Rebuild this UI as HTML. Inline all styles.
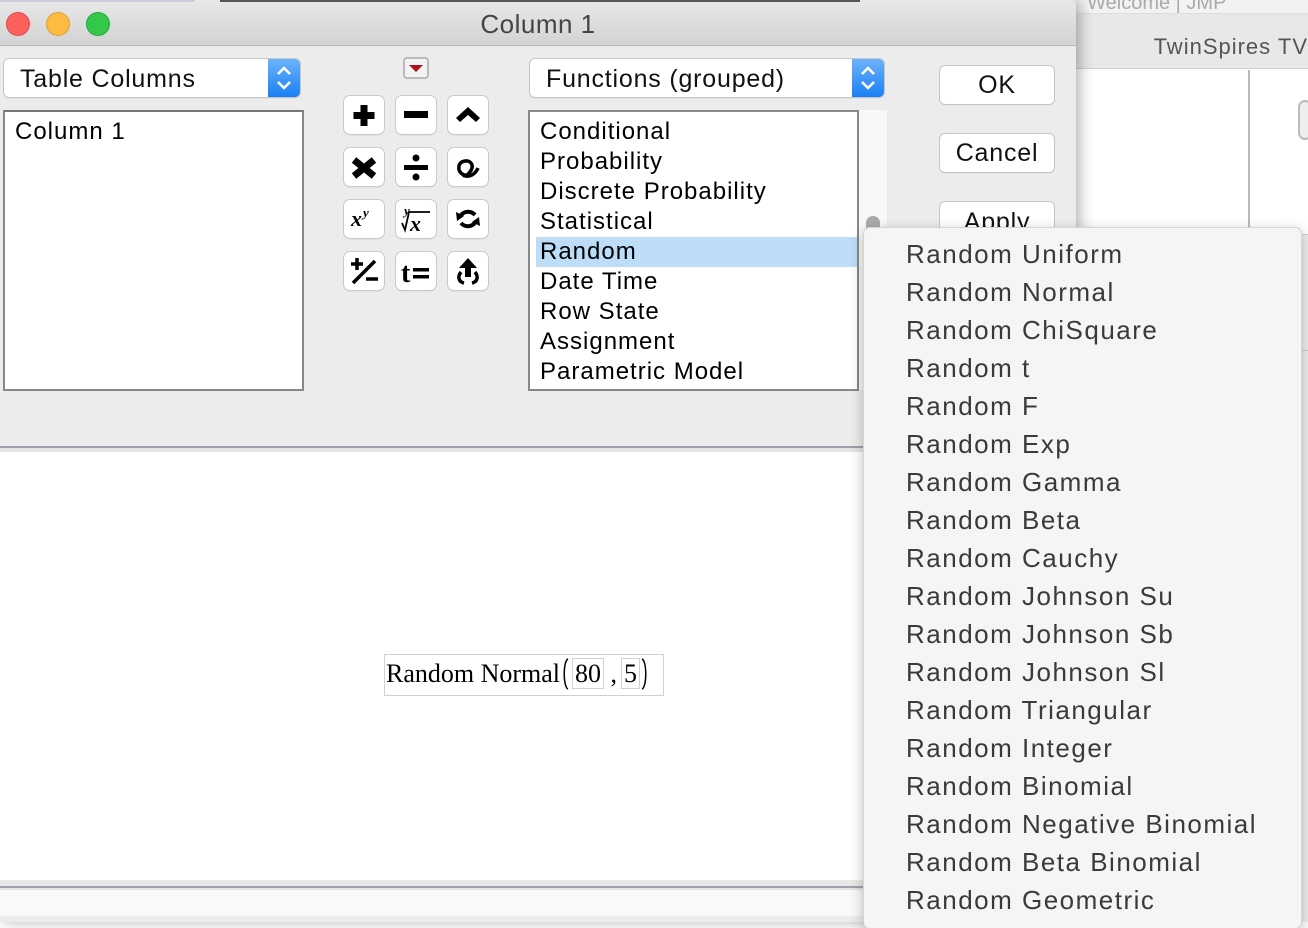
<!DOCTYPE html>
<html><head><meta charset="utf-8"><style>
*{margin:0;padding:0;box-sizing:border-box}
body{width:1308px;height:922px;overflow:hidden;position:relative;background:#fff;font-family:"Liberation Sans",sans-serif}
.a{position:absolute}
.btn{position:absolute;width:40px;height:38px;background:#fff;border-radius:6px;box-shadow:0 0 0 1px #c9c9c9,0 1px 1px #aaa}
.btn svg{position:absolute;left:0;top:0}
.pb{position:absolute;background:#fff;border-radius:5px;box-shadow:0 0 0 1px #c6c6c6,0 1px 1px #aaa;font-size:25px;letter-spacing:.8px;color:#111;text-align:center}
.list div{height:30px;line-height:30px;font-size:24px;letter-spacing:1px;color:#000;padding-left:10px;white-space:nowrap}
.menu div{height:38px;line-height:38px;font-size:26px;letter-spacing:1.5px;color:#3a3a3a;padding-left:42px;white-space:nowrap}
</style></head><body>
<!-- background window -->
<div class="a" style="left:1076px;top:0;width:232px;height:14px;background:#f2f2f2;color:#aaa;font-size:20px;line-height:6px;white-space:nowrap;overflow:hidden">&nbsp;&nbsp;Welcome | JMP</div>
<div class="a" style="left:850px;top:0;width:226px;height:14px;color:#aaa;font-size:20px;line-height:6px;white-space:nowrap;overflow:hidden">&nbsp;&nbsp;Google&nbsp;&nbsp;&nbsp;News&nbsp;&nbsp;&nbsp;WWW</div>
<div class="a" style="left:1076px;top:13px;width:232px;height:1px;background:#ddd"></div>
<div class="a" style="left:1076px;top:14px;width:232px;height:55px;background:#e8e8e8;border-bottom:1px solid #d0d0d0;color:#555;font-size:22px;letter-spacing:1px;text-align:right;padding-top:20px;white-space:nowrap;overflow:hidden">TwinSpires TV</div>
<div class="a" style="left:1248px;top:70px;width:2px;height:160px;background:#bbb"></div>
<div class="a" style="left:1298px;top:100px;width:14px;height:40px;border:2px solid #bbb;border-radius:7px;background:#eee"></div>
<div class="a" style="left:1300px;top:234px;width:8px;height:688px;background:#eee;border-top:1px solid #ccc"></div>
<div class="a" style="left:1300px;top:350px;width:8px;height:1px;background:#ccc"></div>
<!-- dialog window -->
<div class="a" style="left:0;top:0;width:1076px;height:922px;background:#ececec;box-shadow:4px 0 14px rgba(0,0,0,.3);border-top-right-radius:6px;overflow:hidden">
 <div class="a" style="left:0;top:0;width:1076px;height:46px;background:linear-gradient(#e8e8e8,#d3d3d3);border-bottom:1px solid #b8b8b8;text-align:center;font-size:26px;letter-spacing:.5px;line-height:48px;color:#444">Column 1</div>
 <div class="a" style="left:0;top:0;width:195px;height:2px;background:#ccd"></div><div class="a" style="left:220px;top:0;width:640px;height:2px;background:#555"></div>
 <div class="a" style="left:6px;top:12px;width:24px;height:24px;border-radius:50%;background:#fc605c;border:1px solid #de4a46"></div>
 <div class="a" style="left:46px;top:12px;width:24px;height:24px;border-radius:50%;background:#fdbc40;border:1px solid #de9f34"></div>
 <div class="a" style="left:86px;top:12px;width:24px;height:24px;border-radius:50%;background:#34c84a;border:1px solid #27aa35"></div>
 <!-- popups -->
 <div class="pb" style="left:4px;top:59px;width:296px;height:38px;text-align:left;padding-left:16px;line-height:40px">Table Columns<div class="a" style="right:0;top:0;width:32px;height:38px;background:linear-gradient(#6cb3fa,#1b7ff5);border-radius:0 5px 5px 0"><svg width="32" height="38"><path d="M10 15l6-6 6 6M10 23l6 6 6-6" fill="none" stroke="#fff" stroke-width="2.5"/></svg></div></div>
 <div class="pb" style="left:530px;top:59px;width:354px;height:38px;text-align:left;padding-left:16px;line-height:40px">Functions (grouped)<div class="a" style="right:0;top:0;width:32px;height:38px;background:linear-gradient(#6cb3fa,#1b7ff5);border-radius:0 5px 5px 0"><svg width="32" height="38"><path d="M10 15l6-6 6 6M10 23l6 6 6-6" fill="none" stroke="#fff" stroke-width="2.5"/></svg></div></div>
 <!-- lists -->
 <div class="a list" style="left:3px;top:110px;width:301px;height:281px;background:#fff;border:2px solid #888;border-top-color:#777;padding-top:5px"><div>Column 1</div></div>
 <div class="a list" style="left:528px;top:110px;width:331px;height:281px;background:#fff;border:2px solid #888;padding-top:5px">
  <div>Conditional</div><div>Probability</div><div>Discrete Probability</div><div>Statistical</div><div style="background:#bcdcf8;margin-left:6px;padding-left:4px">Random</div><div>Date Time</div><div>Row State</div><div>Assignment</div><div>Parametric Model</div></div>
 <div class="a" style="left:859px;top:110px;width:28px;height:280px;background:#f8f8f8"></div>
 <div class="a" style="left:866px;top:216px;width:14px;height:20px;background:#aaa;border-radius:7px"></div>
 <!-- red dropdown -->
 <div class="a" style="left:403px;top:57px;width:26px;height:22px;background:#f4f4f4;border:2px solid #bbb;border-radius:4px"><svg width="22" height="18"><path d="M4 6h14l-7 7z" fill="#b0101a"/></svg></div>
 <!-- buttons -->
 <div class="btn" style="left:344px;top:96px"><svg width="40" height="38"><path d="M16.5 9h7v7h7v7h-7v7h-7v-7h-7v-7h7z"/></svg></div>
 <div class="btn" style="left:396px;top:96px"><svg width="40" height="38"><rect x="8" y="15" width="24" height="7"/></svg></div>
 <div class="btn" style="left:448px;top:96px"><svg width="40" height="38"><path d="M8 22l12-11 12 11-4 4-8-7-8 7z"/></svg></div>
 <div class="btn" style="left:344px;top:148px"><svg width="40" height="38"><path d="M10 12l20 16M30 12l-20 16" stroke="#000" stroke-width="7"/></svg></div>
 <div class="btn" style="left:396px;top:148px"><svg width="40" height="38"><rect x="8" y="17" width="24" height="5"/><circle cx="20" cy="10" r="3.5"/><circle cx="20" cy="29" r="3.5"/></svg></div>
 <div class="btn" style="left:448px;top:148px"><svg width="40" height="38"><path d="M21 27c-7 1-11-3-10-9 1-5 9-7 12-3 3 4 0 9-5 13 5 1 10-3 12-8" fill="none" stroke="#000" stroke-width="3.5"/></svg></div>
 <div class="btn" style="left:344px;top:200px"><svg width="40" height="38"><text x="7" y="26" font-family="Liberation Serif" font-style="italic" font-weight="bold" font-size="22">x</text><text x="19" y="17" font-family="Liberation Serif" font-style="italic" font-weight="bold" font-size="13">y</text></svg></div>
 <div class="btn" style="left:396px;top:200px"><svg width="40" height="38"><text x="8" y="15" font-family="Liberation Serif" font-style="italic" font-weight="bold" font-size="13">y</text><path d="M6 23l3 7 4-18h21" fill="none" stroke="#000" stroke-width="1.8"/><text x="14" y="31" font-family="Liberation Serif" font-style="italic" font-weight="bold" font-size="22">x</text></svg></div>
 <div class="btn" style="left:448px;top:200px"><svg width="40" height="38"><path d="M27 15a9 9 0 0 0-15 2M13 23a9 9 0 0 0 15-2" fill="none" stroke="#000" stroke-width="4"/><path d="M8 12l1 9 7-5zM32 26l-1-9-7 5z"/></svg></div>
 <div class="btn" style="left:344px;top:252px"><svg width="40" height="38"><path d="M7 12h12M13 6v12M9 31l22-22M22 27h12" stroke="#000" stroke-width="3.5"/></svg></div>
 <div class="btn" style="left:396px;top:252px"><svg width="40" height="38"><text x="5" y="30" font-family="Liberation Serif" font-weight="bold" font-size="28">t</text><rect x="17" y="16" width="16" height="3.5"/><rect x="17" y="23" width="16" height="3.5"/></svg></div>
 <div class="btn" style="left:448px;top:252px"><svg width="40" height="38"><path d="M20 6l-9 10h6v9h6v-9h6z"/><path d="M13 20c-4 5-2 10 3 11M27 20c4 5 2 10-3 11" fill="none" stroke="#000" stroke-width="3.5"/></svg></div>
 <!-- OK etc -->
 <div class="pb" style="left:940px;top:66px;width:114px;height:38px;line-height:38px">OK</div>
 <div class="pb" style="left:940px;top:134px;width:114px;height:38px;line-height:38px">Cancel</div>
 <div class="pb" style="left:940px;top:202px;width:114px;height:38px;line-height:40px">Apply</div>
 <!-- separators / formula area -->
 <div class="a" style="left:0;top:446px;width:1076px;height:2px;background:#9ea3ab"></div>
 <div class="a" style="left:0;top:448px;width:1076px;height:4px;background:#e4e4e4"></div>
 <div class="a" style="left:0;top:452px;width:1076px;height:428px;background:#fff"></div>
 <div class="a" style="left:0;top:880px;width:1076px;height:6px;background:#e8e8e8"></div>
 <div class="a" style="left:0;top:886px;width:1076px;height:2px;background:#9ea3ab"></div>
 <div class="a" style="left:0;top:888px;width:1076px;height:2px;background:#e4e4e4"></div>
 <div class="a" style="left:0;top:890px;width:1076px;height:26px;background:#f9f9f9"></div>
 <div class="a" style="left:384px;top:654px;width:280px;height:42px;border:1px solid #d0d0d0;font-family:'Liberation Serif',serif;font-size:26px;line-height:38px;padding-left:1px;white-space:nowrap">Random Normal<svg width="10" height="38" style="vertical-align:top"><path d="M8 4c-5 2-5 28 0 30" fill="none" stroke="#000" stroke-width="1.5"/></svg><span style="border:1px solid #d0d0d0;padding:0 2px;margin-left:2px">80</span> ,<span style="border:1px solid #d0d0d0;padding:0 2px;margin-left:4px">5</span><svg width="10" height="38" style="vertical-align:top"><path d="M2 4c5 2 5 28 0 30" fill="none" stroke="#000" stroke-width="1.5"/></svg></div>
</div>
<!-- menu -->
<div class="a menu" style="left:864px;top:228px;width:437px;height:700px;background:#f5f5f5;border-radius:6px;box-shadow:0 0 0 1px #d5d5d5,0 4px 14px rgba(0,0,0,.3);padding-top:7px">
<div>Random Uniform</div><div>Random Normal</div><div>Random ChiSquare</div><div>Random t</div><div>Random F</div><div>Random Exp</div><div>Random Gamma</div><div>Random Beta</div><div>Random Cauchy</div><div>Random Johnson Su</div><div>Random Johnson Sb</div><div>Random Johnson Sl</div><div>Random Triangular</div><div>Random Integer</div><div>Random Binomial</div><div>Random Negative Binomial</div><div>Random Beta Binomial</div><div>Random Geometric</div>
</div>
</body></html>
